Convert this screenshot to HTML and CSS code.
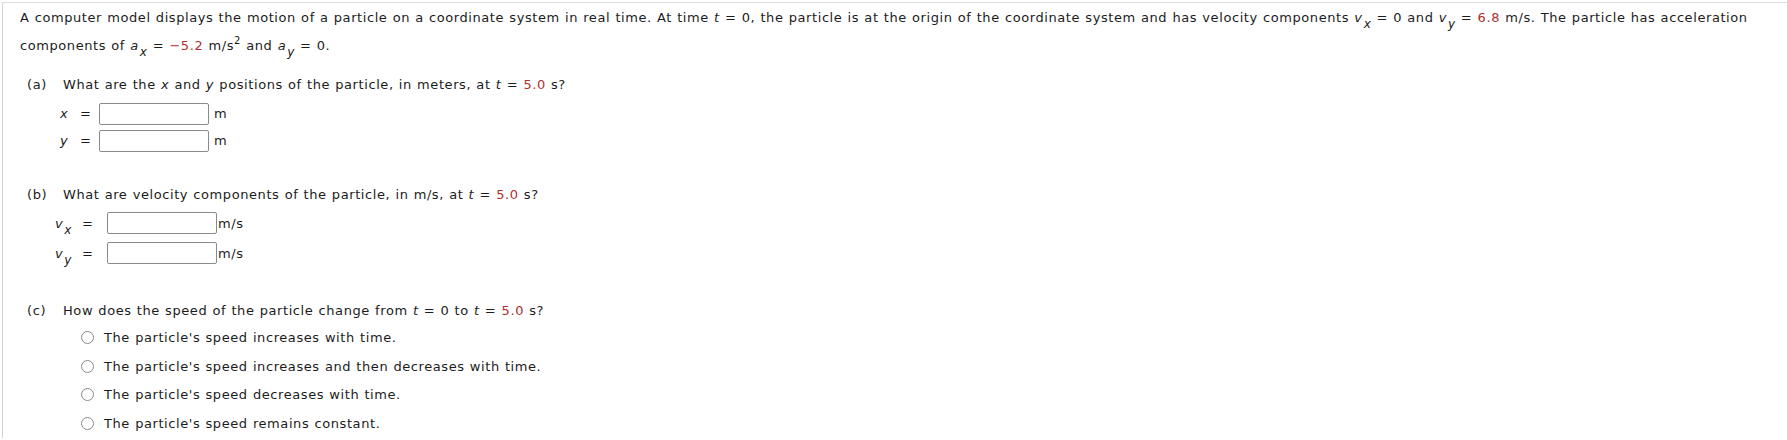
FILE: index.html
```html
<!DOCTYPE html>
<html>
<head>
<meta charset="utf-8">
<link rel="stylesheet" href="styles.css">
</head>
<body>
<div class="question">
  <p class="prompt"><span>A computer model displays the motion of a particle on a coordinate system in real time. At time <i>t</i> = 0, the particle is at the origin of the coordinate system and has velocity components <i>v</i><sub>x</sub> = 0 and <i>v</i><sub>y</sub> = <span class="val">6.8</span> m/s. The particle has acceleration</span> <span>components of <i>a</i><sub>x</sub> = <span class="val">&minus;5.2</span> m/s<sup>2</sup> and <i>a</i><sub>y</sub> = 0.</span></p>

  <div class="part part-a">
    <div class="part-q"><span class="part-label">(a)</span><span>What are the <i>x</i> and <i>y</i> positions of the particle, in meters, at <i>t</i> = <span class="val">5.0</span> s?</span></div>
    <div class="answers">
      <div class="answer-row"><span class="var"><i>x</i></span><span class="eq">=</span><span class="field"></span><span class="unit">m</span></div>
      <div class="answer-row"><span class="var"><i>y</i></span><span class="eq">=</span><span class="field"></span><span class="unit">m</span></div>
    </div>
  </div>

  <div class="part part-b">
    <div class="part-q"><span class="part-label">(b)</span><span>What are velocity components of the particle, in m/s, at <i>t</i> = <span class="val">5.0</span> s?</span></div>
    <div class="answers">
      <div class="answer-row"><span class="var"><i>v</i><sub>x</sub></span><span class="eq">=</span><span class="field"></span><span class="unit">m/s</span></div>
      <div class="answer-row"><span class="var"><i>v</i><sub>y</sub></span><span class="eq">=</span><span class="field"></span><span class="unit">m/s</span></div>
    </div>
  </div>

  <div class="part part-c">
    <div class="part-q"><span class="part-label">(c)</span><span>How does the speed of the particle change from <i>t</i> = 0 to <i>t</i> = <span class="val">5.0</span> s?</span></div>
    <ul class="choices">
      <li class="choice"><span class="radio"></span><span>The particle's speed increases with time.</span></li>
      <li class="choice"><span class="radio"></span><span>The particle's speed increases and then decreases with time.</span></li>
      <li class="choice"><span class="radio"></span><span>The particle's speed decreases with time.</span></li>
      <li class="choice"><span class="radio"></span><span>The particle's speed remains constant.</span></li>
    </ul>
  </div>
</div>
</body>
</html>
```

FILE: styles.css
```css
html, body {
  margin: 0;
  padding: 0;
  background: #ffffff;
}

body {
  font-family: "DejaVu Sans", Verdana, sans-serif;
  font-size: 13px;
  letter-spacing: 0.58px;
  word-spacing: 0.5px;
  color: #1c1c1c;
}

.question {
  margin: 2px 0 0 2px;
  border-top: 1px solid #dcdcdc;
  border-left: 1px solid #d4d4d4;
  height: 436px;
  box-sizing: border-box;
  padding-left: 17px;
}

.prompt {
  margin: 0;
  padding-top: 1px;
  line-height: 28px;
  padding-right: 8px;
}

i {
  font-style: italic;
}

sub {
  font-size: 12px;
  font-style: italic;
  vertical-align: -6px;
  line-height: 0;
  margin-left: 1px;
}

sup {
  font-size: 10px;
  vertical-align: 6px;
  line-height: 0;
}

.val {
  color: #b03030;
}

.part-q {
  display: flex;
  line-height: 20px;
  height: 20px;
  padding-left: 7px;
}

.part-label {
  width: 36px;
}

.part-a .part-q {
  margin-top: 15px;
}

.answers {
  margin-top: 5px;
}

.answer-row {
  display: flex;
  align-items: center;
  height: 27px;
}

.part-a .answer-row {
  padding-left: 40px;
}

.part-a .var {
  width: 20px;
}

.part-a .eq {
  width: 19px;
}

.field {
  display: block;
  width: 108px;
  height: 20px;
  border: 1px solid #8a8a8a;
  border-radius: 2px;
  background: #fff;
}

.unit {
  margin-left: 5px;
}

.part-b .part-q {
  margin-top: 31px;
}

.part-b .answers {
  margin-top: 3px;
}

.part-b .answer-row {
  height: 30px;
  padding-left: 35px;
}

.part-b .var {
  width: 27px;
}

.part-b .eq {
  width: 25px;
}

.part-b .unit {
  margin-left: 1px;
}

.part-c .part-q {
  margin-top: 33px;
}

.choices {
  list-style: none;
  margin: 2px 0 0 0;
  padding: 0 0 0 61px;
}

.choice {
  display: flex;
  align-items: center;
  height: 28.7px;
}

.radio {
  display: block;
  width: 11px;
  height: 11px;
  border: 1px solid #8a8a8a;
  border-radius: 50%;
  margin-right: 10px;
  background: #fff;
}
```
